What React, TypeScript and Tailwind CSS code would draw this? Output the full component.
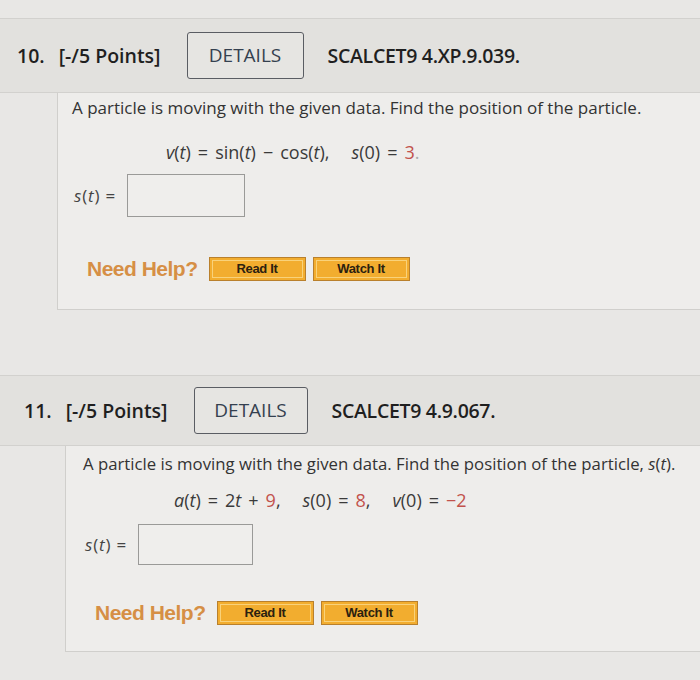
import React from 'react';

const sans = { fontFamily: '"Open Sans", "Noto Sans", sans-serif' };

function HelpButton({ label, width }: { label: string; width: string }) {
  return (
    <div className={`${width} h-[24px] border border-[#b9802c] bg-[#f2ad2f] p-[2px]`}>
      <div className="flex h-full items-center justify-center border border-[#f9d27a] text-[13px] font-bold tracking-[-0.3px] text-[#2b2110] [font-family:'Liberation_Sans',Arial,sans-serif]">
        {label}
      </div>
    </div>
  );
}

function Red({ children }: { children: React.ReactNode }) {
  return <span className="text-[#c2524c]">{children}</span>;
}

function I({ children }: { children: React.ReactNode }) {
  return <span className="italic">{children}</span>;
}

// math operator with wide spacing, like the rendered formulas
function Op({ children }: { children: React.ReactNode }) {
  return <span className="mx-[7px] inline-block">{children}</span>;
}

function Sep() {
  return <span className="inline-block w-[22px]" />;
}

type QuestionProps = {
  num: string;
  code: string;
  headerPad: string;
  boxW: string;
  headerH: string;
  bodyLeft: string;
  bodyH: string;
  prompt: React.ReactNode;
  promptSize: string;
  equation: React.ReactNode;
  textPad: string;
  topPad: string;
  eqGap: string;
  inputGap: string;
  inputBox: string;
  labelPad: string;
  helpGap: string;
  helpPad: string;
};

function Question(p: QuestionProps) {
  return (
    <div>
      {/* header band */}
      <div
        className={`${p.headerH} flex items-center border-y border-[#d2d1ce] bg-[#e2e1de] ${p.headerPad} text-[19.5px] text-[#1f1f1f]`}
        style={sans}
      >
        <span className="font-semibold">{p.num}</span>
        <span className="ml-[14px] font-semibold">[-/5 Points]</span>
        <div
          className={`ml-[26px] ${p.boxW} flex h-[47px] items-center justify-center rounded-[3px] border-[1.5px] border-[#5a5d63] bg-[#e6e5e2] text-[19px] text-[#34404f]`}
        >
          DETAILS
        </div>
        <span className="ml-[24px] font-semibold tracking-[-0.3px]">{p.code}</span>
      </div>

      {/* body panel */}
      <div
        className={`${p.bodyLeft} ${p.bodyH} border-b border-l border-[#d0cfcc] bg-[#eeedeb] ${p.topPad} text-[#333]`}
        style={sans}
      >
        <div className={`${p.textPad} ${p.promptSize} leading-[24px]`}>{p.prompt}</div>
        <div className={`${p.eqGap} pl-[108px] text-[18px] leading-[24px] text-[#3a3a3a]`}>{p.equation}</div>
        <div className={`${p.inputGap} ${p.labelPad} flex items-center`}>
          <span className="w-[53px] text-[17px] tracking-[0.8px] text-[#444]">
            <I>s</I>(<I>t</I>) =
          </span>
          <div className={`${p.inputBox} border border-[#9a9a98] bg-[#efeeec]`} />
        </div>
        <div className={`${p.helpGap} ${p.helpPad} flex items-center`}>
          <span className="mr-[11px] text-[21px] font-bold tracking-[-0.5px] text-[#d68f45] [font-family:'Liberation_Sans',Arial,sans-serif]">
            Need Help?
          </span>
          <HelpButton label="Read It" width="w-[97px]" />
          <div className="w-[7px]" />
          <HelpButton label="Watch It" width="w-[97px]" />
        </div>
      </div>
    </div>
  );
}

export default function App() {
  return (
    <div className="min-h-[680px] w-[700px] bg-[#e8e7e5] pt-[18px]">
      <Question
        num="10."
        code="SCALCET9 4.XP.9.039."
        headerPad="pl-[17px]"
        headerH="h-[75px]"
        boxW="w-[117px]"
        bodyLeft="ml-[57px]"
        bodyH="h-[217px]"
        topPad="pt-[3px]"
        textPad="pl-[14px]"
        promptSize="text-[17px]"
        prompt="A particle is moving with the given data. Find the position of the particle."
        equation={
          <>
            <I>v</I>(<I>t</I>)<Op>=</Op>sin(<I>t</I>)<Op>−</Op>cos(<I>t</I>),<Sep />
            <I>s</I>(0)<Op>=</Op>
            <Red>3</Red>
            <span className="text-[#aaa]">.</span>
          </>
        }
        eqGap="mt-[20px]"
        inputGap="mt-[10px]"
        inputBox="h-[43px] w-[118px]"
        labelPad="pl-[16px]"
        helpGap="mt-[36px]"
        helpPad="pl-[29px]"
      />
      <div className="h-[65px]" />
      <Question
        num="11."
        code="SCALCET9 4.9.067."
        headerPad="pl-[24px]"
        headerH="h-[71px]"
        boxW="w-[114px]"
        bodyLeft="ml-[65px]"
        bodyH="h-[206px]"
        topPad="pt-[6px]"
        textPad="pl-[17px]"
        promptSize="text-[16.75px]"
        prompt={
          <>
            A particle is moving with the given data. Find the position of the particle, <I>s</I>(<I>t</I>).
          </>
        }
        equation={
          <>
            <I>a</I>(<I>t</I>)<Op>=</Op>2<I>t</I>
            <Op>+</Op>
            <Red>9</Red>,<Sep />
            <I>s</I>(0)<Op>=</Op>
            <Red>8</Red>,<Sep />
            <I>v</I>(0)<Op>=</Op>
            <Red>−2</Red>
          </>
        }
        eqGap="mt-[12px]"
        inputGap="mt-[12px]"
        inputBox="h-[41px] w-[115px]"
        labelPad="pl-[19px]"
        helpGap="mt-[32px]"
        helpPad="pl-[29px]"
      />
    </div>
  );
}
